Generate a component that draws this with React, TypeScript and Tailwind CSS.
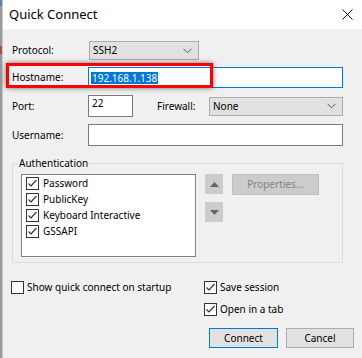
import React from 'react';

const font = { fontFamily: '"Noto Sans", "Liberation Sans", sans-serif' };

const Check = ({ checked }: { checked: boolean }) => (
    <div className="w-[13px] h-[13px] border border-[#333333] bg-white flex items-center justify-center shrink-0">
        {checked && (
            <svg width="11" height="11" viewBox="0 0 11 11">
                <path d="M1.5 5.5 L4 8 L9.5 2" fill="none" stroke="#333333" strokeWidth="1.2" />
            </svg>
        )}
    </div>
);

const Chevron = () => (
    <svg width="9" height="6" viewBox="0 0 9 6">
        <path d="M0.5 0.8 L4.5 4.8 L8.5 0.8" fill="none" stroke="#555555" strokeWidth="1" />
    </svg>
);

const App: React.FC = () => {
    const methods = ['Password', 'PublicKey', 'Keyboard Interactive', 'GSSAPI'];

    return (
        <div className="w-[362px] h-[358px] flex bg-[#f0f0f0] overflow-hidden text-[10px] text-black" style={font}>
            {/* edge of the window behind */}
            <div className="w-[2px] flex flex-col bg-[#9a9a9a]">
                <div className="h-[6px] bg-[#5a7fb0]" />
                <div className="h-[40px]" />
                <div className="h-[8px] bg-[#b04a4a]" />
            </div>

            <div className="flex-1 flex flex-col border-l border-[#c8c8c8]">
                {/* title bar */}
                <div className="h-[29px] bg-white flex items-center justify-between pl-[6px] pr-[9px] shrink-0">
                    <span className="text-[13px]">Quick Connect</span>
                    <svg width="11" height="11" viewBox="0 0 11 11">
                        <path d="M0.5 0.5 L10.5 10.5 M10.5 0.5 L0.5 10.5" stroke="#111111" strokeWidth="1" />
                    </svg>
                </div>

                <div className="relative flex flex-col pl-[9px]">
                    {/* Protocol */}
                    <div className="flex items-center h-[19px] mt-[12px]">
                        <span className="w-[77px]">Protocol:</span>
                        <div className="w-[110px] h-[19px] bg-[#e1e1e1] border border-[#adadad] flex items-center justify-between pl-[3px] pr-[6px]">
                            <span>SSH2</span>
                            <Chevron />
                        </div>
                    </div>

                    {/* Hostname */}
                    <div className="flex items-center h-[21px] mt-[7px]">
                        <span className="w-[76px]">Hostname:</span>
                        <div className="w-[255px] h-[21px] bg-white border border-[#0078d7] flex items-center pl-[2px]">
                            <span className="bg-[#0078d7] text-white px-px leading-[12px]">192.168.1.138</span>
                        </div>
                    </div>

                    {/* Port / Firewall */}
                    <div className="flex items-center h-[22px] mt-[7px]">
                        <span className="w-[76px]">Port:</span>
                        <div className="w-[45px] h-[22px] bg-white border border-[#7a7a7a] pl-[3px] leading-[14px]">22</div>
                        <span className="w-[52px] ml-[24px]">Firewall:</span>
                        <div className="w-[134px] h-[19px] bg-[#e1e1e1] border border-[#adadad] flex items-center justify-between pl-[3px] pr-[6px]">
                            <span>None</span>
                            <Chevron />
                        </div>
                    </div>

                    {/* Username */}
                    <div className="flex items-center h-[22px] mt-[7px]">
                        <span className="w-[76px]">Username:</span>
                        <div className="w-[255px] h-[22px] bg-white border border-[#7a7a7a]" />
                    </div>

                    {/* Authentication group */}
                    <div className="relative w-[331px] h-[100px] mt-[17px] border border-[#dcdcdc] flex items-start pt-[10px] pl-[8px]">
                        <span className="absolute -top-[8px] left-[5px] bg-[#f0f0f0] px-px">Authentication</span>
                        <div className="w-[175px] h-[83px] bg-white border border-[#828282] flex flex-col pl-[4px]">
                            {methods.map((m) => (
                                <div key={m} className="flex items-center gap-[4px] h-[16px]">
                                    <Check checked />
                                    <span>{m}</span>
                                </div>
                            ))}
                        </div>
                        <div className="flex flex-col gap-[8px] ml-[9px]">
                            <div className="w-[18px] h-[20px] bg-[#cccccc] flex items-center justify-center">
                                <svg width="9" height="5" viewBox="0 0 9 5"><path d="M0 5 L4.5 0 L9 5 Z" fill="#666666" /></svg>
                            </div>
                            <div className="w-[18px] h-[20px] bg-[#cccccc] flex items-center justify-center">
                                <svg width="9" height="5" viewBox="0 0 9 5"><path d="M0 0 L4.5 5 L9 0 Z" fill="#666666" /></svg>
                            </div>
                        </div>
                        <div className="w-[87px] h-[21px] ml-[9px] bg-[#cccccc] border border-[#bfbfbf] flex items-center justify-center text-[#838383]">
                            Properties...
                        </div>
                    </div>

                    {/* options */}
                    <div className="flex mt-[18px] -ml-[1px]">
                        <div className="flex items-center gap-[3px] h-[13px] w-[193px]">
                            <Check checked={false} />
                            <span>Show quick connect on startup</span>
                        </div>
                        <div className="flex flex-col gap-[9px]">
                            <div className="flex items-center gap-[3px] h-[13px]">
                                <Check checked />
                                <span>Save session</span>
                            </div>
                            <div className="flex items-center gap-[3px] h-[13px]">
                                <Check checked />
                                <span>Open in a tab</span>
                            </div>
                        </div>
                    </div>

                    {/* buttons */}
                    <div className="flex gap-[8px] mt-[12px] ml-[197px]">
                        <div className="w-[69px] h-[20px] bg-[#e1e1e1] border border-[#0078d7] flex items-center justify-center">Connect</div>
                        <div className="w-[68px] h-[20px] bg-[#e1e1e1] border border-[#adadad] flex items-center justify-center">Cancel</div>
                    </div>

                    {/* red annotation around the hostname */}
                    <div className="absolute left-[3px] top-[34px] w-[207px] h-[25px] border-[3px] border-[#ff0000] shadow-[0_0_5px_rgba(0,0,0,0.55)]" />
                </div>
            </div>
        </div>
    );
};

export default App;
